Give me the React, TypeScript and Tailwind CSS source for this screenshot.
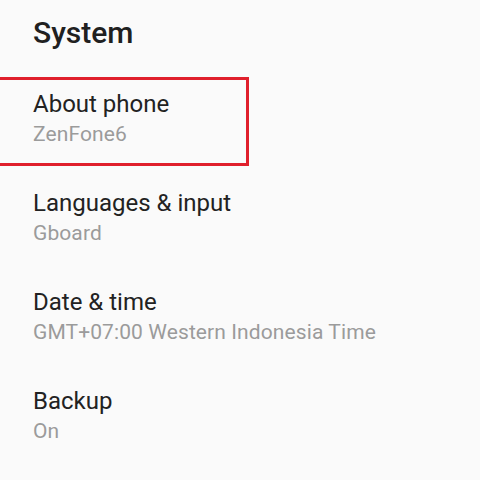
import React from "react";

const items = [
  { title: "About phone", sub: "ZenFone6", highlight: true },
  { title: "Languages & input", sub: "Gboard" },
  { title: "Date & time", sub: "GMT+07:00 Western Indonesia Time" },
  { title: "Backup", sub: "On" },
];

export default function App() {
  return (
    <div
      className="w-[480px] h-[480px] overflow-hidden bg-[#fafafa] relative"
      style={{ fontFamily: "Roboto, 'Noto Sans', sans-serif" }}
    >
      <div className="h-[77px] pl-[33px] pt-[18px]">
        <div className="text-[30px] leading-[30px] font-medium text-[#202020]">System</div>
      </div>
      <div className="flex flex-col">
        {items.map((it) => (
          <div key={it.title} className="relative h-[99px] pl-[33px] pt-[11px]">
            {it.highlight && (
              <div className="absolute left-[-10px] top-0 w-[259px] h-[89px] border-[3px] border-[#e0202c]" />
            )}
            <div className="text-[24px] leading-[32px] text-[#222222]">{it.title}</div>
            <div className="mt-0 text-[21px] leading-[28px] tracking-[0.1px] text-[#9b9b9b]">{it.sub}</div>
          </div>
        ))}
      </div>
    </div>
  );
}
